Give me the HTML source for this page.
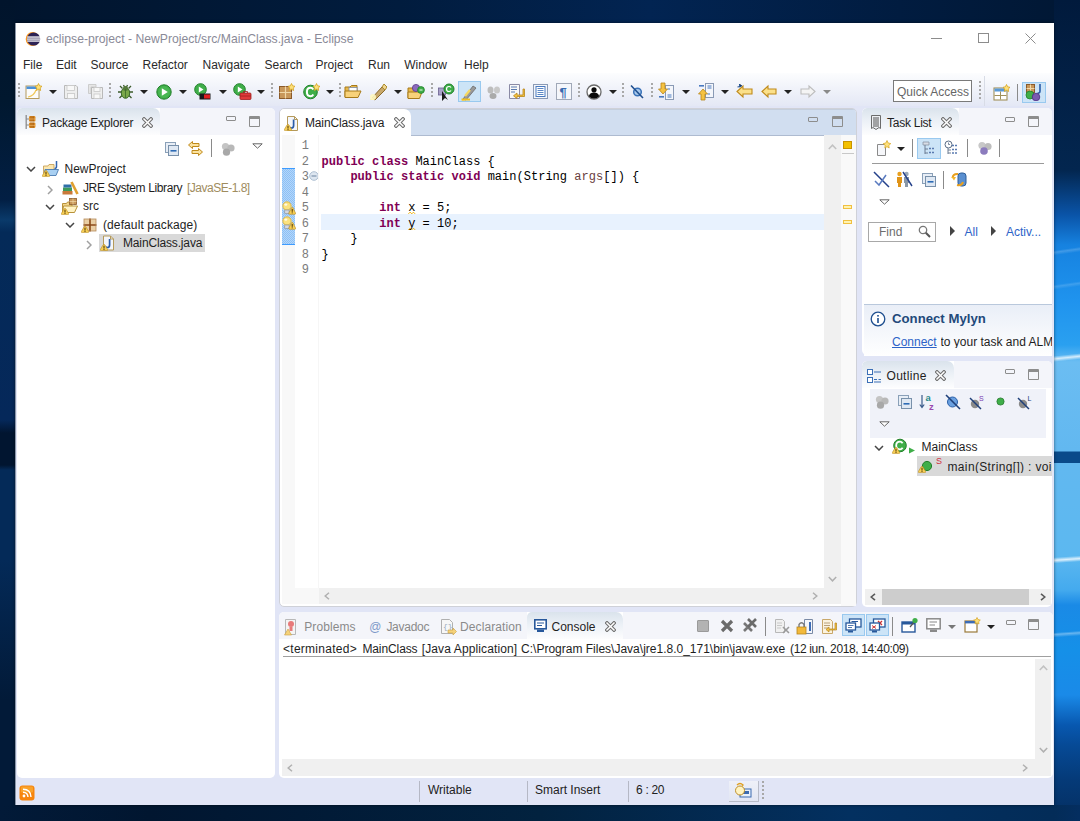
<!DOCTYPE html>
<html><head><meta charset="utf-8">
<style>
*{box-sizing:border-box;margin:0;padding:0}
html,body{width:1080px;height:821px;overflow:hidden}
body{position:relative;font-family:"Liberation Sans",sans-serif;font-size:12px;color:#000;background:#02183a}
.a{position:absolute}
.t{position:absolute;white-space:pre;line-height:12px;font-size:12px}
.m{font-family:"Liberation Mono",monospace}
#bgR{left:1054px;top:0;width:26px;height:821px;
background:
linear-gradient(172deg,transparent 248px,rgba(255,255,255,0.18) 250px,transparent 253px),
linear-gradient(172deg,transparent 282px,rgba(255,255,255,0.15) 284px,transparent 287px),
linear-gradient(174deg,transparent 354px,rgba(255,255,255,0.75) 357px,transparent 360px),
linear-gradient(176deg,transparent 556px,rgba(255,255,255,0.8) 559px,transparent 562px),
linear-gradient(176deg,transparent 631px,rgba(255,255,255,0.35) 633px,transparent 636px),
linear-gradient(180deg,transparent 451px,#0a4a8a 452px,#0a4a8a 463px,transparent 463px),
linear-gradient(180deg,#011a3c 0px,#03264f 170px,#0a54a8 215px,#1682e0 245px,#1f93ee 300px,#2aa0f0 345px,#6bbdf2 362px,#62b8f0 450px,#5cb8f0 555px,#44aaee 590px,#1a8ae6 605px,#1590e8 650px,#1a8ae8 695px,#0858b0 725px,#064a96 745px,#053a78 780px,#042e60 821px)}
#bgB{left:0;top:805px;width:1080px;height:16px;background:linear-gradient(90deg,#021a38 0,#011630 150px,#011a36 300px,#02223f 540px,#033060 850px,#032c58 1054px,#042e60 1080px)}
#bgT{left:0;top:0;width:1080px;height:23px;background:linear-gradient(90deg,#01142c 0,#011c3e 400px,#022452 650px,#011c40 900px,#011733 1080px)}
#bgL{left:0;top:0;width:15px;height:821px;background:linear-gradient(180deg,#01142c 0,#01182f 100px,#021f44 200px,#0a3a6a 220px,#042a58 232px,#05285a 420px,#011530 433px,#011530 465px,#042a58 470px,#042a58 560px,#03234a 620px,#021a38 700px,#021a38 821px)}
#win{left:15px;top:23px;width:1039px;height:782px;background:#fff;border-left:1px solid #8a96a8;box-shadow:0 0 3px rgba(0,0,0,0.5)}
#tool{left:16px;top:73px;width:1038px;height:33px;background:linear-gradient(180deg,#fcfdfe 0,#f1f3fa 45%,#e4e8f5 100%)}
#main{left:16px;top:106px;width:1038px;height:699px;background:#e1e5f6}
.p{position:absolute;background:#fff;border-radius:5px;overflow:hidden}
.tab{position:absolute;top:0;height:27px;border-radius:5px 7px 0 0;background:linear-gradient(180deg,#dae3ec 0,#ebf0f6 45%,#fdfdfe 100%)}
.hrest{position:absolute;top:0;height:27px;background:#f4f5fa}
.mini{position:absolute;width:10px;height:5px;border:1.5px solid #8d8d8d;border-radius:1px}
.maxi{position:absolute;width:11px;height:11px;border:1.3px solid #8d8d8d;border-top-width:3px;border-radius:1px}
.sep{position:absolute;width:1px;background:#9a9a9a}
.dots{position:absolute;width:2px;background:repeating-linear-gradient(180deg,#a8a8a8 0,#a8a8a8 2px,transparent 2px,transparent 4px)}
.dd{position:absolute;width:0;height:0;border-left:4px solid transparent;border-right:4px solid transparent;border-top:4px solid #222}
.ico{position:absolute}
.cl{position:absolute}
.sb{position:absolute;background:#f0f0f0}
.k{color:#7f0055;font-weight:bold}
.v{color:#6a3e3e}
.code{font-size:12px;letter-spacing:0.02px}
</style></head><body>

<svg width="0" height="0" style="position:absolute">
<defs>
 <symbol id="xcl" viewBox="0 0 11 11"><path d="M2 2L9 9M9 2L2 9" stroke="#6e6e6e" stroke-width="3.6" stroke-linecap="square" fill="none"/><path d="M2 2L9 9M9 2L2 9" stroke="#fff" stroke-width="1.5" stroke-linecap="square" fill="none"/></symbol>
 <symbol id="warn" viewBox="0 0 8 7"><path d="M3.1 0.9Q4 -0.2 4.9 0.9L7.6 5.4Q8 6.6 6.8 6.6H1.2Q0 6.6 0.4 5.4Z" fill="#f7cf55" stroke="#b98a1e" stroke-width="0.6"/><rect x="3.5" y="1.8" width="1" height="2.8" fill="#4a3200"/><rect x="3.5" y="5.1" width="1" height="0.9" fill="#4a3200"/></symbol>
 <symbol id="chvd" viewBox="0 0 10 6"><path d="M1 1L5 5L9 1" stroke="#454545" stroke-width="1.5" fill="none"/></symbol>
 <symbol id="chvr" viewBox="0 0 6 10"><path d="M1 1L5 5L1 9" stroke="#a0a0a0" stroke-width="1.5" fill="none"/></symbol>
 <symbol id="jfile" viewBox="0 0 16 16"><path d="M3.5 1.5H10.5L13.5 4.5V15.5H3.5Z" fill="#f4f6fb" stroke="#b59a5a" stroke-width="1"/><path d="M10.5 1.5V4.5H13.5" fill="none" stroke="#b59a5a" stroke-width="1"/><path d="M9.6 4.5V10.5Q9.6 13 7.4 13Q6.2 13 5.6 12.3" fill="none" stroke="#2a5ca8" stroke-width="1.7"/></symbol>
 <symbol id="pkg" viewBox="0 0 16 16"><rect x="2" y="2" width="12" height="12" fill="#e9cfa5"/><path d="M8 1.5V14.5M1.5 8H14.5" stroke="#8a4a1a" stroke-width="1.6"/><rect x="2" y="2" width="12" height="12" fill="none" stroke="#b58a5a" stroke-width="0.8"/></symbol>
 <symbol id="balls" viewBox="0 0 16 16"><circle cx="5.5" cy="5.5" r="3.6" fill="#c4c4c4"/><circle cx="11" cy="7" r="3.6" fill="#b8b8b8"/><circle cx="6.5" cy="11.2" r="3.6" fill="#a8a8a8"/></symbol>
 <symbol id="collapse" viewBox="0 0 16 16"><rect x="1.5" y="1.5" width="10" height="10" fill="#e8eef6" stroke="#8aa0b8"/><rect x="4.5" y="4.5" width="10" height="10" fill="#dfe8f3" stroke="#7890aa"/><rect x="6.5" y="9" width="6" height="1.6" fill="#2d6bb5"/></symbol>
 <symbol id="tri" viewBox="0 0 11 6"><path d="M0.8 0.8H10.2L5.5 5.2Z" fill="#fff" stroke="#666" stroke-width="1"/></symbol>
</defs></svg>
<div class="a" id="bgT"></div><div class="a" id="bgL"></div><div class="a" id="bgR"></div><div class="a" id="bgB"></div>
<div class="a" id="win"></div>

<!-- ===== Title bar ===== -->
<svg class="a" style="left:25px;top:31px" width="16" height="16" viewBox="0 0 16 16">
 <circle cx="7.6" cy="8" r="6.9" fill="#f7941e"/>
 <circle cx="8.6" cy="8" r="6.6" fill="#2c2255"/>
 <rect x="2.2" y="5.4" width="12.8" height="1.3" fill="#fff"/>
 <rect x="2" y="7.4" width="13.2" height="1.3" fill="#fff"/>
 <rect x="2.2" y="9.4" width="12.8" height="1.3" fill="#fff"/>
</svg>
<div class="t" style="left:46px;top:33.4px;font-size:12.2px;color:#8a8a98">eclipse-project - NewProject/src/MainClass.java - Eclipse</div>
<div class="a" style="left:931px;top:38px;width:11px;height:1px;background:#8c8c8c"></div>
<div class="a" style="left:978px;top:33px;width:11px;height:10px;border:1px solid #8c8c8c"></div>
<svg class="a" style="left:1025px;top:33px" width="11" height="11" viewBox="0 0 11 11"><path d="M0.5 0.5L10.5 10.5M10.5 0.5L0.5 10.5" stroke="#8c8c8c" stroke-width="1"/></svg>

<!-- ===== Menu ===== -->
<div class="t" style="left:23px;top:59px;color:#2a2a2a">File</div>
<div class="t" style="left:56px;top:59px;color:#2a2a2a">Edit</div>
<div class="t" style="left:90.5px;top:59px;color:#2a2a2a">Source</div>
<div class="t" style="left:142.5px;top:59px;color:#2a2a2a">Refactor</div>
<div class="t" style="left:202.5px;top:59px;color:#2a2a2a">Navigate</div>
<div class="t" style="left:264.5px;top:59px;color:#2a2a2a">Search</div>
<div class="t" style="left:315.6px;top:59px;color:#2a2a2a">Project</div>
<div class="t" style="left:368px;top:59px;color:#2a2a2a">Run</div>
<div class="t" style="left:404.3px;top:59px;color:#2a2a2a">Window</div>
<div class="t" style="left:464px;top:59px;color:#2a2a2a">Help</div>

<!-- ===== Toolbar ===== -->
<div class="a" id="tool"></div>

<div class="dots" style="left:18px;top:83px;height:16px"></div>
<svg class="a" style="left:25px;top:83px" width="17" height="17" viewBox="0 0 17 17"><rect x="1" y="3" width="13" height="12.5" fill="#fbfbfb" stroke="#b49a5e" stroke-width="1"/><rect x="1.5" y="3.5" width="12" height="2.5" fill="#4a90d9"/><path d="M3 14Q9 13 11 7" stroke="#f0c75a" stroke-width="1.2" fill="none"/><path d="M13.5 0.5L14.6 2.8L17 3.3L15.2 5L15.6 7.5L13.5 6.3L11.4 7.5L11.8 5L10 3.3L12.4 2.8Z" fill="#fde07a" stroke="#d6a21e" stroke-width="0.8"/></svg>
<div class="dd" style="left:48.5px;top:90px"></div>
<svg class="a" style="left:63px;top:84px" width="16" height="16" viewBox="0 0 16 16"><path d="M1.5 1.5H13L14.5 3V14.5H1.5Z" fill="#eeeeee" stroke="#b9b9b9"/><rect x="4" y="1.5" width="7.5" height="5" fill="#f8f8f8" stroke="#c8c8c8" stroke-width="0.8"/><rect x="4.5" y="9.5" width="7" height="5" fill="#f8f8f8" stroke="#c8c8c8" stroke-width="0.8"/></svg>
<svg class="a" style="left:87px;top:83px" width="17" height="17" viewBox="0 0 17 17"><path d="M1.5 1.5H9V4H4V10.5H1.5Z" fill="#e6e6e6" stroke="#c4c4c4" stroke-width="0.8"/><path d="M4.5 4.5H15.5V15.5H4.5Z" fill="#eeeeee" stroke="#b9b9b9"/><rect x="7" y="4.5" width="6" height="4" fill="#f8f8f8" stroke="#c8c8c8" stroke-width="0.8"/><rect x="7" y="11" width="6" height="4.5" fill="#f8f8f8" stroke="#c8c8c8" stroke-width="0.8"/></svg>
<div class="dots" style="left:109px;top:83px;height:16px"></div>
<svg class="a" style="left:117px;top:83px" width="17" height="17" viewBox="0 0 17 17"><path d="M3 3L5.5 5.5M14 3L11.5 5.5M1 9H4.5M16 9H12.5M2.5 15L5 12.5M14.5 15L12 12.5M6.5 2L7.5 4M10.5 2L9.5 4" stroke="#3b5a2a" stroke-width="1.3"/><ellipse cx="8.5" cy="10" rx="4.2" ry="5.3" fill="#7aa84a" stroke="#3b6a2a"/><circle cx="8.5" cy="5.5" r="2.5" fill="#557a3a"/><path d="M8.5 6V15" stroke="#3b6a2a" stroke-width="0.8"/></svg>
<div class="dd" style="left:140px;top:90px"></div>
<svg class="a" style="left:156px;top:84px" width="16" height="16" viewBox="0 0 16 16"><circle cx="8" cy="8" r="7.2" fill="#3fae49" stroke="#21802a"/><circle cx="8" cy="8" r="5.8" fill="#49b752"/><path d="M5.8 4.3L11.8 8L5.8 11.7Z" fill="#fff"/></svg>
<div class="dd" style="left:179px;top:90px"></div>
<svg class="a" style="left:194px;top:83px" width="17" height="17" viewBox="0 0 17 17"><circle cx="6.5" cy="6.5" r="5.8" fill="#3fae49" stroke="#21802a"/><path d="M4.8 3.6L9.5 6.5L4.8 9.4Z" fill="#fff"/><rect x="5.5" y="10.5" width="11" height="6" fill="#1a1a1a"/><rect x="10" y="11.5" width="6" height="4" fill="#e02020"/></svg>
<div class="dd" style="left:218.5px;top:90px"></div>
<svg class="a" style="left:233px;top:83px" width="19" height="17" viewBox="0 0 19 17"><circle cx="6.5" cy="6.5" r="5.8" fill="#3fae49" stroke="#21802a"/><path d="M4.8 3.6L9.5 6.5L4.8 9.4Z" fill="#fff"/><rect x="7" y="10" width="11" height="6.5" rx="1" fill="#e03a3a" stroke="#a02020" stroke-width="0.8"/><path d="M10.5 10V8.5H14.5V10M7 13H18" stroke="#a02020" stroke-width="0.8" fill="none"/></svg>
<div class="dd" style="left:257px;top:90px"></div>
<div class="dots" style="left:271px;top:83px;height:16px"></div>
<svg class="a" style="left:278px;top:83px" width="17" height="17" viewBox="0 0 17 17"><rect x="1.5" y="3.5" width="12" height="12" fill="#c8975a" stroke="#8a5a2a"/><path d="M7.5 3.5V15.5M1.5 9.5H13.5" stroke="#f0d8a8" stroke-width="1.2"/><path d="M13.5 0.5L14.6 2.8L17 3.3L15.2 5L15.6 7.5L13.5 6.3L11.4 7.5L11.8 5L10 3.3L12.4 2.8Z" fill="#fde07a" stroke="#d6a21e" stroke-width="0.8"/></svg>
<svg class="a" style="left:303px;top:83px" width="17" height="17" viewBox="0 0 17 17"><circle cx="7.5" cy="9" r="6.8" fill="#3fae49" stroke="#21802a"/><path d="M10.3 6.6Q9.3 4.8 7.5 4.8Q3.9 4.8 3.9 9Q3.9 13.2 7.5 13.2Q9.3 13.2 10.3 11.4" stroke="#fff" stroke-width="2" fill="none"/><path d="M13.5 0.5L14.6 2.8L17 3.3L15.2 5L15.6 7.5L13.5 6.3L11.4 7.5L11.8 5L10 3.3L12.4 2.8Z" fill="#fde07a" stroke="#d6a21e" stroke-width="0.8"/></svg>
<div class="dd" style="left:326px;top:90px"></div>
<div class="dots" style="left:339px;top:83px;height:16px"></div>
<svg class="a" style="left:344px;top:84px" width="18" height="16" viewBox="0 0 18 16"><path d="M1 3H6L7.5 1.5H13V13H1Z" fill="#e8b84a" stroke="#a77a1a"/><rect x="5" y="3.5" width="8" height="5" fill="#fff" stroke="#7a8aa5" stroke-width="0.8"/><path d="M1 7H17L14 13.5H1Z" fill="#f8d27a" stroke="#a77a1a"/></svg>
<svg class="a" style="left:369px;top:83px" width="18" height="18" viewBox="0 0 18 18"><path d="M3 15L13 4L16 7L6 17Z" fill="#c8a86a" stroke="#8a6a2a"/><path d="M13 4L15 1L18 4L16 7Z" fill="#f0d590" stroke="#a8892a"/><path d="M1 17L3 15L6 17Z" fill="#fff3a0"/><circle cx="4" cy="14" r="3" fill="#fff8c0" opacity="0.9"/></svg>
<div class="dd" style="left:394px;top:90px"></div>
<svg class="a" style="left:407px;top:83px" width="19" height="17" viewBox="0 0 19 17"><path d="M1 5H6L7.5 3.5H12V15H1Z" fill="#e8b84a" stroke="#a77a1a"/><path d="M1 9H15L12.5 15.5H1Z" fill="#f8d27a" stroke="#a77a1a"/><circle cx="9" cy="5" r="3.6" fill="#8a6abd" stroke="#5a3a8a" stroke-width="0.8"/><circle cx="14" cy="7" r="3.4" fill="#3fae49" stroke="#21802a" stroke-width="0.8"/><path d="M12.5 7H15.5" stroke="#fff" stroke-width="0.9"/></svg>
<div class="dots" style="left:431px;top:83px;height:16px"></div>
<svg class="a" style="left:437px;top:83px" width="18" height="18" viewBox="0 0 18 18"><rect x="1.5" y="5" width="7" height="7" fill="#a8a0c8" stroke="#6a6090" stroke-width="0.8"/><circle cx="12" cy="6" r="5" fill="#3fae49" stroke="#21802a"/><path d="M14 4.5Q13.3 3.5 12 3.5Q9.5 3.5 9.5 6Q9.5 8.5 12 8.5Q13.3 8.5 14 7.5" stroke="#fff" stroke-width="1.2" fill="none"/><path d="M5 8L5 18L8 15L11 17Z" fill="#1a1a1a"/></svg>
<div class="a" style="left:458px;top:80.5px;width:23px;height:21.5px;background:#cce4f7;border:1px solid #99c9ef"></div>
<svg class="a" style="left:461px;top:84px" width="17" height="17" viewBox="0 0 17 17"><path d="M2 15L12 2L15 4L5 16Z" fill="#9a9a9a" stroke="#6a6a6a" stroke-width="0.8"/><path d="M2 15L5 16L1 17Z" fill="#ffd84a"/><path d="M0.5 15.5H9" stroke="#f0c020" stroke-width="2"/><path d="M4 12L9 6" stroke="#f6d860" stroke-width="2.2"/></svg>
<svg class="a" style="left:486px;top:85px" width="16" height="15" viewBox="0 0 16 15"><ellipse cx="4.5" cy="5" rx="3" ry="3.5" fill="#bdbdbd"/><ellipse cx="11" cy="5" rx="3" ry="3.5" fill="#c8c8c8"/><ellipse cx="7" cy="11" rx="3.5" ry="3" fill="#aaaaaa"/></svg>
<svg class="a" style="left:508px;top:83px" width="18" height="17" viewBox="0 0 18 17"><path d="M1.5 1.5H11.5V15.5H1.5Z" fill="#f8f8f8" stroke="#8a8aa5"/><path d="M3 4H9M3 6.5H9M3 9H7" stroke="#5a7ab0"/><path d="M15 6V12H9V10L5.5 12.8L9 15.5V13.5H16.5V6Z" fill="#f5c242" stroke="#b8861a" stroke-width="0.8"/></svg>
<svg class="a" style="left:532px;top:83px" width="17" height="17" viewBox="0 0 17 17"><rect x="1.5" y="1.5" width="14" height="14" fill="#f4f6fb" stroke="#8a9ab5"/><rect x="4" y="3.5" width="9" height="10" fill="#fff" stroke="#4a7ac0"/><path d="M5.5 5.5H11.5M5.5 7.5H11.5M5.5 9.5H11.5M5.5 11.5H11.5" stroke="#4a7ac0" stroke-width="0.9"/></svg>
<svg class="a" style="left:556px;top:83px" width="16" height="17" viewBox="0 0 16 17"><rect x="0.5" y="0.5" width="15" height="16" fill="#f4f6fb" stroke="#a0a8b8"/><text x="3.5" y="13.5" font-family="Liberation Sans" font-size="13" font-weight="bold" fill="#3a6ab0">&#182;</text></svg>
<div class="dots" style="left:578px;top:83px;height:16px"></div>
<svg class="a" style="left:585.5px;top:84px" width="16" height="16" viewBox="0 0 16 16"><circle cx="8" cy="8" r="7" fill="#fff" stroke="#6a6a6a" stroke-width="1.3"/><circle cx="8" cy="5.8" r="2.6" fill="#0a0a0a"/><path d="M2.8 12.2Q3.5 8.4 8 8.4Q12.5 8.4 13.2 12.2Q11 14.6 8 14.6Q5 14.6 2.8 12.2Z" fill="#0a0a0a"/></svg>
<div class="dd" style="left:609px;top:90px"></div>
<div class="dots" style="left:622px;top:83px;height:16px"></div>
<svg class="a" style="left:630px;top:84px" width="14" height="15" viewBox="0 0 14 15"><circle cx="7.5" cy="8" r="3.8" fill="#a8c8ec" stroke="#3a72b8" stroke-width="1.5"/><path d="M1 1.5L13 14" stroke="#1f4f8f" stroke-width="1.6"/></svg>
<div class="dots" style="left:651px;top:83px;height:16px"></div>
<svg class="a" style="left:658px;top:82px" width="17" height="19" viewBox="0 0 17 19"><rect x="7.5" y="3.5" width="8" height="14" fill="#f4f6fb" stroke="#8a9ab5"/><path d="M9.5 13H13.5M9.5 15H13.5M9.5 7H12" stroke="#4a7ac0"/><path d="M3 1H7V7H9.5L5 12L0.5 7H3Z" fill="#f5c242" stroke="#b8861a" stroke-width="0.8"/><rect x="1" y="14" width="5" height="1.6" fill="#4a7ac0"/></svg>
<div class="dd" style="left:682px;top:90px"></div>
<svg class="a" style="left:697.5px;top:82px" width="17" height="19" viewBox="0 0 17 19"><rect x="7.5" y="1.5" width="8" height="14" fill="#f4f6fb" stroke="#8a9ab5"/><path d="M9.5 4H13.5M9.5 6H13.5M9.5 12H12" stroke="#4a7ac0"/><path d="M3 18H7V12H9.5L5 7L0.5 12H3Z" fill="#f5c242" stroke="#b8861a" stroke-width="0.8"/><rect x="1" y="3" width="5" height="1.6" fill="#4a7ac0"/></svg>
<div class="dd" style="left:721px;top:90px"></div>
<svg class="a" style="left:736px;top:83px" width="17" height="17" viewBox="0 0 17 17"><path d="M1 8.5L7 3V6H16V11H7V14Z" fill="#fbe08a" stroke="#c08a1a" stroke-width="1.1"/><path d="M3.5 1L4 3.5L6 2.5M4 3.5L1.5 4" stroke="#1f4f8f" stroke-width="1.2"/></svg>
<svg class="a" style="left:761px;top:83px" width="16" height="17" viewBox="0 0 16 17"><path d="M1 8.5L7 3V6H15V11H7V14Z" fill="#fbe08a" stroke="#c08a1a" stroke-width="1.1"/></svg>
<div class="dd" style="left:784px;top:90px"></div>
<svg class="a" style="left:799.5px;top:83px" width="16" height="17" viewBox="0 0 16 17"><path d="M15 8.5L9 3V6H1V11H9V14Z" fill="#f4f4f4" stroke="#bdbdbd" stroke-width="1.1"/></svg>
<div class="dd" style="left:822.5px;top:90px;border-top-color:#8a8a8a"></div>

<div class="dots" style="left:979px;top:81px;height:20px"></div>
<div class="a" style="left:984px;top:76px;width:1px;height:30px;background:#d8dce6"></div>
<svg class="a" style="left:993px;top:84px" width="17" height="17" viewBox="0 0 17 17"><rect x="1" y="4" width="13" height="12" fill="#fff" stroke="#a0905a" stroke-width="1.1"/><rect x="1.5" y="4.5" width="12" height="3" fill="#5a9ad8"/><path d="M7.5 7.5V15.5M1.5 11.5H13.5" stroke="#a0905a"/><path d="M13.5 0.5L14.6 2.8L17 3.3L15.2 5L15.6 7.5L13.5 6.3L11.4 7.5L11.8 5L10 3.3L12.4 2.8Z" fill="#fde07a" stroke="#d6a21e" stroke-width="0.8"/></svg>
<div class="sep" style="left:1016.5px;top:84px;height:17px;background:#8a8a8a"></div>
<div class="a" style="left:1022px;top:81.5px;width:24px;height:21.5px;background:#cce4f7;border:1px solid #99c9ef"></div>
<svg class="a" style="left:1025px;top:83px" width="18" height="18" viewBox="0 0 18 18"><rect x="1.5" y="1.5" width="8" height="8" fill="#c8975a" stroke="#8a5a2a"/><path d="M5.5 1.5V9.5M1.5 5.5H9.5" stroke="#f0d8a8"/><path d="M15 1V8Q15 10.5 12.5 10" stroke="#2a5ca8" stroke-width="1.6" fill="none"/><circle cx="5" cy="12" r="4" fill="#3fae49" stroke="#21802a" stroke-width="0.8"/><circle cx="11" cy="14" r="3.8" fill="#7a5ab0" stroke="#4a2a80" stroke-width="0.8"/></svg>


<!-- Quick access -->
<div class="a" style="left:893px;top:80px;width:79px;height:22px;border:1px solid #7a7a7a;background:#fff"></div>
<div class="t" style="left:897px;top:86px;color:#666">Quick Access</div>

<!-- ===== Main area ===== -->
<div class="a" id="main"></div>

<!-- Package Explorer -->
<div class="p" style="left:17px;top:108px;width:258px;height:670px">
  <div class="tab" style="left:0;width:143px"></div>
  <div class="hrest" style="left:143px;width:115px"></div>
</div>


<!-- PE content -->
<svg class="a" style="left:25px;top:115px" width="11" height="14" viewBox="0 0 11 14"><rect x="0.6" y="0" width="1.1" height="14" fill="#7a7a7a"/><rect x="1" y="3.5" width="3" height="1" fill="#8a8a8a"/><rect x="1" y="9.5" width="3" height="1" fill="#8a8a8a"/><rect x="4" y="1" width="6.4" height="5.6" rx="1.2" fill="#d98a22"/><rect x="4" y="7.4" width="6.4" height="5.6" rx="1.2" fill="#d98a22"/><path d="M5.9 1.3V6.3M7.2 1.3V6.3M8.5 1.3V6.3M5.9 7.7V12.7M7.2 7.7V12.7M8.5 7.7V12.7" stroke="#9a5210" stroke-width="0.6"/><path d="M4 4H10.4M4 10.4H10.4" stroke="#f6c47a" stroke-width="0.6"/></svg>
<div class="t" style="left:42px;top:117px;color:#1e1e1e;letter-spacing:-0.22px">Package Explorer</div>
<svg class="ico" style="left:141.5px;top:117px" width="11" height="11"><use href="#xcl"/></svg>
<div class="mini" style="left:226px;top:116px"></div>
<div class="maxi" style="left:249px;top:116px"></div>
<svg class="ico" style="left:164px;top:141px" width="16" height="16"><use href="#collapse"/></svg>
<svg class="a" style="left:187px;top:140px" width="17" height="17" viewBox="0 0 17 17"><path d="M1.5 5L5.5 1.5V3.5H12V6.5H5.5V8.5Z" fill="#fbe3a0" stroke="#c08a1a" stroke-width="1"/><path d="M15.5 12L11.5 8.5V10.5H5V13.5H11.5V15.5Z" fill="#fbe3a0" stroke="#c08a1a" stroke-width="1"/></svg>
<div class="sep" style="left:210.5px;top:139px;height:18px;background:#8a8a8a"></div>
<svg class="ico" style="left:220px;top:141px" width="16" height="16"><use href="#balls"/></svg>
<svg class="ico" style="left:252px;top:143px" width="11" height="6"><use href="#tri"/></svg>

<svg class="ico" style="left:26px;top:166px" width="10" height="6"><use href="#chvd"/></svg>
<svg class="a" style="left:42px;top:160px" width="18" height="18" viewBox="0 0 18 18"><path d="M1.5 6H6L7 4.5H12V13H1.5Z" fill="#fbe7b0" stroke="#c9a35a" stroke-width="0.9"/><path d="M3 9.5H16.5L14 15.5H2Z" fill="#a9d0f2" stroke="#4a7ab0" stroke-width="0.9"/><path d="M14.5 1V6.5Q14.5 8.5 12.5 8.5" stroke="#3366b0" stroke-width="1.5" fill="none"/></svg>
<svg class="ico" style="left:41.5px;top:169.5px" width="8" height="7"><use href="#warn"/></svg>
<div class="t" style="left:64.5px;top:163.3px;color:#1e1e1e">NewProject</div>

<svg class="ico" style="left:47px;top:184.5px" width="6" height="10"><use href="#chvr"/></svg>
<svg class="a" style="left:62px;top:181px" width="17" height="14" viewBox="0 0 17 14"><rect x="0.5" y="10" width="10" height="3.5" fill="#c8793a"/><rect x="1" y="6.5" width="9" height="3.5" fill="#3d9a5a"/><rect x="1.5" y="3.5" width="8" height="3" fill="#2f6fa8"/><path d="M9.5 1L15.5 13" stroke="#e0a030" stroke-width="2.6"/></svg>
<div class="t" style="left:83px;top:181.5px;color:#1e1e1e;letter-spacing:-0.38px">JRE System Library</div>
<div class="t" style="left:187px;top:181.5px;color:#a08c5e;letter-spacing:-0.5px">[JavaSE-1.8]</div>

<svg class="ico" style="left:45px;top:203.5px" width="10" height="6"><use href="#chvd"/></svg>
<svg class="a" style="left:61px;top:198px" width="18" height="17" viewBox="0 0 18 17"><path d="M1.5 5.5H5.5L6.5 4H11V14.5H1.5Z" fill="#f2d58a" stroke="#b8923a"/><path d="M2.5 8H16.5L13.5 14.5H1.5Z" fill="#fff3c4" stroke="#b8923a"/><rect x="8.5" y="0.5" width="7" height="6" fill="#c8975a" stroke="#8a5a2a" stroke-width="0.8"/><path d="M12 0.5V6.5M8.5 3.5H15.5" stroke="#f0d8a8" stroke-width="0.7"/></svg>
<svg class="ico" style="left:60.5px;top:207.5px" width="8" height="7"><use href="#warn"/></svg>
<div class="t" style="left:83px;top:200.3px;color:#1e1e1e">src</div>

<svg class="ico" style="left:65px;top:222px" width="10" height="6"><use href="#chvd"/></svg>
<svg class="ico" style="left:82px;top:217px" width="16" height="16"><use href="#pkg"/></svg>
<svg class="ico" style="left:80.5px;top:226.0px" width="8" height="7"><use href="#warn"/></svg>
<div class="t" style="left:103px;top:219px;color:#1e1e1e;letter-spacing:0.1px">(default package)</div>

<svg class="ico" style="left:86px;top:239.5px" width="6" height="10"><use href="#chvr"/></svg>
<div class="a" style="left:98.5px;top:233.5px;width:106px;height:18.5px;background:#d9d9d9"></div>
<svg class="ico" style="left:100px;top:234px" width="16" height="17"><use href="#jfile"/></svg>
<svg class="ico" style="left:99.5px;top:243.5px" width="8" height="7"><use href="#warn"/></svg>
<div class="t" style="left:123px;top:237px;color:#1e1e1e;letter-spacing:-0.15px">MainClass.java</div>

<!-- Editor -->
<div class="p" style="left:279px;top:108px;width:578px;height:499px;border:1px solid #cfd1d8">
  <div class="a" style="left:120px;top:0;width:457px;height:27px;background:#d1def0;border-top:1px solid #c5cfdd;border-bottom:1px solid #aebbd0"></div>
  <div class="a" style="left:0;top:0;width:131px;height:27px;background:#fff;border-radius:5px 7px 0 0"></div>
</div>


<!-- Editor content -->
<svg class="ico" style="left:284px;top:115px" width="16" height="16"><use href="#jfile"/></svg>
<svg class="ico" style="left:283.5px;top:123.5px" width="8" height="7"><use href="#warn"/></svg>
<div class="t" style="left:305px;top:117.3px;color:#1e1e1e;letter-spacing:-0.15px">MainClass.java</div>
<svg class="ico" style="left:393.5px;top:117px" width="11" height="11"><use href="#xcl"/></svg>
<div class="mini" style="left:808px;top:116.5px"></div>
<div class="maxi" style="left:831.5px;top:116px"></div>
<div class="a" style="left:282px;top:135px;width:13px;height:469px;background:#f8f8f8"></div>
<div class="a" style="left:295px;top:588px;width:24px;height:16px;background:#f8f8f8"></div>
<div class="a" style="left:282px;top:168px;width:13px;height:77px;background-color:#b4d6fa;background-image:repeating-conic-gradient(#8cc0f5 0 25%,transparent 0 50%);background-size:2px 2px;border-top:1px solid #3d9bff;border-bottom:1px solid #3d9bff"></div>
<div class="a" style="left:321px;top:214px;width:503px;height:15.6px;background:#e8f2fe"></div>
<div class="t m" style="left:292px;width:17px;text-align:right;top:139.3px;line-height:15.5px;height:15.5px;color:#7b7b7b">1</div>
<div class="t m" style="left:292px;width:17px;text-align:right;top:154.8px;line-height:15.5px;height:15.5px;color:#7b7b7b">2</div>
<div class="t m" style="left:292px;width:17px;text-align:right;top:170.3px;line-height:15.5px;height:15.5px;color:#7b7b7b">3</div>
<div class="t m" style="left:292px;width:17px;text-align:right;top:185.8px;line-height:15.5px;height:15.5px;color:#7b7b7b">4</div>
<div class="t m" style="left:292px;width:17px;text-align:right;top:201.3px;line-height:15.5px;height:15.5px;color:#7b7b7b">5</div>
<div class="t m" style="left:292px;width:17px;text-align:right;top:216.8px;line-height:15.5px;height:15.5px;color:#7b7b7b">6</div>
<div class="t m" style="left:292px;width:17px;text-align:right;top:232.3px;line-height:15.5px;height:15.5px;color:#7b7b7b">7</div>
<div class="t m" style="left:292px;width:17px;text-align:right;top:247.8px;line-height:15.5px;height:15.5px;color:#7b7b7b">8</div>
<div class="t m" style="left:292px;width:17px;text-align:right;top:263.3px;line-height:15.5px;height:15.5px;color:#7b7b7b">9</div>
<div class="t m code" style="left:321.5px;top:154.8px;line-height:15.5px;color:#000"><b class="k">public</b> <b class="k">class</b> MainClass {</div>
<div class="t m code" style="left:321.5px;top:170.3px;line-height:15.5px;color:#000">    <b class="k">public</b> <b class="k">static</b> <b class="k">void</b> main(String <span class="v">args</span>[]) {</div>
<div class="t m code" style="left:321.5px;top:201.3px;line-height:15.5px;color:#000">        <b class="k">int</b> x = 5;</div>
<div class="t m code" style="left:321.5px;top:216.8px;line-height:15.5px;color:#000">        <b class="k">int</b> y = 10;</div>
<div class="t m code" style="left:321.5px;top:232.3px;line-height:15.5px;color:#000">    }</div>
<div class="t m code" style="left:321.5px;top:247.8px;line-height:15.5px;color:#000">}</div>

<svg class="a" style="left:309px;top:171px" width="10" height="10" viewBox="0 0 10 10"><circle cx="5" cy="5" r="4.3" fill="#dde6f0" stroke="#aebfd2"/><rect x="2.5" y="4.4" width="5" height="1.2" fill="#7d93ad"/></svg>
<svg class="a" style="left:282px;top:200.5px" width="14" height="14" viewBox="0 0 14 14"><circle cx="5" cy="5.2" r="4.9" fill="#fff" opacity="0.6"/><circle cx="5" cy="5" r="4.2" fill="#fbe27e" stroke="#c9a232" stroke-width="0.8"/><ellipse cx="3.8" cy="3.6" rx="1.5" ry="1.2" fill="#fff" opacity="0.8"/><rect x="2.6" y="9" width="4.6" height="3.6" rx="0.6" fill="#d4d8de" stroke="#8a929c" stroke-width="0.7"/><path d="M9.6 6.6Q10.2 5.8 10.8 6.6L13.6 12.2Q13.8 13.3 12.8 13.3H7.6Q6.6 13.3 6.8 12.2Z" fill="#f7cf55" stroke="#b98a1e" stroke-width="0.6"/><rect x="9.7" y="8" width="1" height="2.8" fill="#4a3200"/><rect x="9.7" y="11.4" width="1" height="0.9" fill="#4a3200"/></svg>
<svg class="a" style="left:282px;top:216px" width="14" height="14" viewBox="0 0 14 14"><circle cx="5" cy="5.2" r="4.9" fill="#fff" opacity="0.6"/><circle cx="5" cy="5" r="4.2" fill="#fbe27e" stroke="#c9a232" stroke-width="0.8"/><ellipse cx="3.8" cy="3.6" rx="1.5" ry="1.2" fill="#fff" opacity="0.8"/><rect x="2.6" y="9" width="4.6" height="3.6" rx="0.6" fill="#d4d8de" stroke="#8a929c" stroke-width="0.7"/><path d="M9.6 6.6Q10.2 5.8 10.8 6.6L13.6 12.2Q13.8 13.3 12.8 13.3H7.6Q6.6 13.3 6.8 12.2Z" fill="#f7cf55" stroke="#b98a1e" stroke-width="0.6"/><rect x="9.7" y="8" width="1" height="2.8" fill="#4a3200"/><rect x="9.7" y="11.4" width="1" height="0.9" fill="#4a3200"/></svg>

<svg class="a" style="left:407.5px;top:210.5px" width="10" height="4" viewBox="0 0 12 4"><path d="M0.5 3L2.5 1L4.5 3L6.5 1L8.5 3" stroke="#f0b000" stroke-width="1.2" fill="none"/></svg>
<svg class="a" style="left:407.5px;top:226.5px" width="10" height="4" viewBox="0 0 12 4"><path d="M0.5 3L2.5 1L4.5 3L6.5 1L8.5 3" stroke="#f0b000" stroke-width="1.2" fill="none"/></svg>
<!-- scrollbars -->
<div class="sb" style="left:824px;top:135px;width:17px;height:469px"></div>
<svg class="a" style="left:828px;top:144px" width="9" height="6" viewBox="0 0 9 6"><path d="M0.8 5L4.5 1.2L8.2 5" stroke="#c2c2c2" stroke-width="1.5" fill="none"/></svg>
<svg class="a" style="left:828px;top:576px" width="9" height="6" viewBox="0 0 9 6"><path d="M0.8 1L4.5 4.8L8.2 1" stroke="#b0b0b0" stroke-width="1.5" fill="none"/></svg>
<div class="sb" style="left:319px;top:588px;width:505px;height:16px"></div>
<svg class="a" style="left:324px;top:592px" width="6" height="8" viewBox="0 0 6 8"><path d="M5 0.8L1.2 4L5 7.2" stroke="#b0b0b0" stroke-width="1.5" fill="none"/></svg>
<svg class="a" style="left:812px;top:592px" width="6" height="8" viewBox="0 0 6 8"><path d="M1 0.8L4.8 4L1 7.2" stroke="#b0b0b0" stroke-width="1.5" fill="none"/></svg>
<div class="a" style="left:841px;top:135px;width:15px;height:471px;background:#f9f9f9"></div>
<div class="a" style="left:843px;top:141px;width:8.5px;height:8px;background:#f3c000;border:1px solid #c89400"></div>
<div class="a" style="left:842px;top:153px;width:12px;height:1px;background:#c8c8c8"></div>
<div class="a" style="left:843px;top:204.5px;width:9px;height:4px;background:#fff3b0;border:1px solid #f0c040"></div>
<div class="a" style="left:843px;top:220px;width:9px;height:4px;background:#fff3b0;border:1px solid #f0c040"></div>

<!-- Task List -->
<div class="p" style="left:862px;top:108px;width:190px;height:247px">
  <div class="tab" style="left:0;width:97px"></div>
  <div class="hrest" style="left:97px;width:93px"></div>
</div>


<!-- Task list content -->
<svg class="a" style="left:869.5px;top:115px" width="12" height="15" viewBox="0 0 12 15"><path d="M1.5 0.5H10.5V13.5L9 12.5L6 14.5L3 12.5L1.5 13.5Z" fill="#eef0f3" stroke="#6b6b6b"/><path d="M3 3H9M3 5H9M3 7H9M3 9H9M3 11H9" stroke="#555" stroke-width="1"/></svg>
<div class="t" style="left:887px;top:117px;color:#1e1e1e;letter-spacing:-0.25px">Task List</div>
<svg class="ico" style="left:940.5px;top:117px" width="11" height="11"><use href="#xcl"/></svg>
<div class="mini" style="left:1005px;top:116.5px"></div>
<div class="maxi" style="left:1028px;top:116px"></div>

<svg class="a" style="left:876px;top:140px" width="16" height="17" viewBox="0 0 16 17"><path d="M1.5 4.5H9.5V15.5H1.5Z" fill="#f6f7fa" stroke="#8a8a8a"/><path d="M11 0.5L12.2 3L14.8 3.6L12.8 5.4L13.2 8L11 6.7L8.8 8L9.2 5.4L7.2 3.6L9.8 3Z" fill="#fde07a" stroke="#d6a21e" stroke-width="0.7"/></svg>
<div class="dd" style="left:897px;top:146.5px"></div>
<div class="sep" style="left:911.5px;top:139px;height:18px;background:#8a8a8a"></div>
<div class="a" style="left:917px;top:137.5px;width:24px;height:21px;background:#cce4f7;border:1px solid #99c9ef"></div>
<svg class="a" style="left:921px;top:140px" width="16" height="16" viewBox="0 0 16 16"><path d="M2 2H8V5H2Z" fill="#d8dde5" stroke="#8a95a5" stroke-width="0.8"/><path d="M4 5V14M4 9H7M4 13H7" stroke="#6d7d92" stroke-width="1"/><path d="M8 8.5H14M8 12.5H14" stroke="#5a7ab0" stroke-width="1.4" stroke-dasharray="2 1"/></svg>
<svg class="a" style="left:944px;top:140px" width="16" height="16" viewBox="0 0 16 16"><circle cx="4.5" cy="4.5" r="3.5" fill="#fff" stroke="#5a6d85" stroke-width="1"/><path d="M4.5 2.5V4.5H6" stroke="#5a6d85" stroke-width="0.8" fill="none"/><path d="M4 8V14M4 10H7M4 13H7" stroke="#6d7d92" stroke-width="1"/><path d="M8 5.5H14M8 9.5H14M8 13H14" stroke="#5a7ab0" stroke-width="1.4" stroke-dasharray="2 1"/></svg>
<div class="sep" style="left:967px;top:139px;height:18px;background:#8a8a8a"></div>
<svg class="a" style="left:977px;top:140px" width="16" height="16" viewBox="0 0 16 16"><circle cx="5" cy="5.5" r="3.6" fill="#c8c8c8"/><circle cx="11" cy="6.5" r="3.6" fill="#bdbdbd"/><circle cx="7" cy="11" r="3.8" fill="#8b7bbd"/></svg>
<div class="sep" style="left:999px;top:139px;height:18px;background:#8a8a8a"></div>
<div class="a" style="left:872px;top:163px;width:172px;height:1px;background:#9a9a9a"></div>

<svg class="a" style="left:873px;top:171px" width="17" height="17" viewBox="0 0 17 17"><path d="M1 1L16 16" stroke="#24408a" stroke-width="1.5"/><path d="M2 10L6 14L13 4" stroke="#5a7bc0" stroke-width="1.5" fill="none"/></svg>
<svg class="a" style="left:895px;top:171px" width="18" height="17" viewBox="0 0 18 17"><circle cx="4.5" cy="3" r="2.2" fill="#e8a020"/><path d="M2 6H7V12H6V16H3V12H2Z" fill="#e09418"/><circle cx="11.5" cy="3" r="2.2" fill="#9aa8b8"/><path d="M9 6H14V12H13V16H10V12H9Z" fill="#8a98a8"/><path d="M8 1L17 15" stroke="#24408a" stroke-width="1.4"/></svg>
<svg class="ico" style="left:921px;top:172px" width="16" height="16"><use href="#collapse"/></svg>
<div class="sep" style="left:943px;top:171px;height:18px;background:#8a8a8a"></div>
<svg class="a" style="left:951px;top:171px" width="17" height="17" viewBox="0 0 17 17"><rect x="7" y="2" width="8" height="13" rx="3" fill="#5a8fd0" stroke="#2f5f9a"/><path d="M1.5 7Q2 2.5 7 3" stroke="#e8a020" stroke-width="2" fill="none"/><path d="M12 11Q11 15 6 14" stroke="#e8a020" stroke-width="2" fill="none"/><path d="M0.5 6L3 9.5L5 6" fill="#f5b830"/></svg>
<svg class="ico" style="left:878.5px;top:199px" width="11" height="6"><use href="#tri"/></svg>

<div class="a" style="left:868px;top:221.5px;width:68px;height:20px;border:1px solid #a8a8a8;background:#fff"></div>
<div class="t" style="left:879px;top:226.3px;color:#6d6d6d">Find</div>
<svg class="a" style="left:918px;top:224.5px" width="13" height="13" viewBox="0 0 13 13"><circle cx="5" cy="5" r="3.7" fill="#fff" stroke="#777" stroke-width="1.3"/><path d="M7.8 7.8L12 12" stroke="#555" stroke-width="2"/></svg>
<svg class="a" style="left:950px;top:226px" width="5" height="10" viewBox="0 0 5 10"><path d="M0 0L5 5L0 10Z" fill="#444"/></svg>
<div class="t" style="left:964.5px;top:226.3px;color:#2d63c8">All</div>
<svg class="a" style="left:991px;top:226px" width="5" height="10" viewBox="0 0 5 10"><path d="M0 0L5 5L0 10Z" fill="#444"/></svg>
<div class="t" style="left:1006px;top:226.3px;color:#2d63c8">Activ...</div>

<div class="a" style="left:864px;top:303.5px;width:188px;height:52px;background:linear-gradient(180deg,#e9eef7,#ffffff)"></div>
<div class="a" style="left:864px;top:303.5px;width:188px;height:1px;background:#b9c8dc"></div>
<svg class="a" style="left:870px;top:310.5px" width="16" height="16" viewBox="0 0 16 16"><circle cx="8" cy="8" r="6.8" fill="#fff" stroke="#1f4f8f" stroke-width="1.3"/><rect x="7.2" y="7" width="1.6" height="5" fill="#1f4f8f"/><rect x="7.2" y="4" width="1.6" height="1.6" fill="#1f4f8f"/></svg>
<div class="t" style="left:892px;top:312.3px;font-size:13.2px;line-height:13px;font-weight:bold;color:#22497a">Connect Mylyn</div>
<div class="t" style="left:892px;top:335.6px;color:#2d63c8;text-decoration:underline">Connect</div>
<div class="t" style="left:940.5px;top:335.6px;color:#1e1e1e;width:111px;overflow:hidden">to your task and ALM</div>

<!-- Outline -->
<div class="p" style="left:862px;top:361px;width:190px;height:246px">
  <div class="tab" style="left:0;width:92px"></div>
  <div class="hrest" style="left:92px;width:98px"></div>
</div>


<!-- Outline content -->
<svg class="a" style="left:867px;top:368.5px" width="15" height="15" viewBox="0 0 15 15"><rect x="0.5" y="0.5" width="5" height="5" fill="#fff" stroke="#3b6fb6"/><rect x="0.5" y="8.5" width="5" height="5" fill="#fff" stroke="#3b6fb6"/><path d="M7 3H14M7 10.5H10M11.5 10.5H14M7 13H14" stroke="#3b6fb6" stroke-width="1.2"/></svg>
<div class="t" style="left:886.5px;top:369.6px;color:#1e1e1e;letter-spacing:0.3px">Outline</div>
<svg class="ico" style="left:935px;top:369.5px" width="11" height="11"><use href="#xcl"/></svg>
<div class="mini" style="left:1005px;top:368.5px"></div>
<div class="maxi" style="left:1028px;top:368.5px"></div>
<div class="a" style="left:869.5px;top:389px;width:176.5px;height:48.5px;background:#f0f2f9"></div>
<svg class="ico" style="left:873.5px;top:393.5px" width="16" height="16"><use href="#balls"/></svg>
<svg class="ico" style="left:897px;top:393.5px" width="16" height="16"><use href="#collapse"/></svg>
<svg class="a" style="left:919px;top:393px" width="19" height="17" viewBox="0 0 19 17"><path d="M3 2V14M0.8 11.5L3 14.5L5.2 11.5" stroke="#3a5a8a" stroke-width="1.2" fill="none"/><text x="6.5" y="8" font-family="Liberation Sans" font-size="9.5" font-weight="bold" fill="#2a8a8a">a</text><text x="10" y="16.5" font-family="Liberation Sans" font-size="9.5" font-weight="bold" fill="#9a4ab0">z</text></svg>
<svg class="a" style="left:944.5px;top:393.5px" width="16" height="16" viewBox="0 0 16 16"><circle cx="7.5" cy="8" r="5" fill="#6aa0e0" stroke="#2a5fa8"/><path d="M1 1L15 15" stroke="#20407a" stroke-width="1.6"/></svg>
<svg class="a" style="left:969px;top:393.5px" width="16" height="16" viewBox="0 0 16 16"><circle cx="6" cy="10" r="4.2" fill="#8a8a8a"/><path d="M1 4L12 15" stroke="#20407a" stroke-width="1.5"/><text x="10" y="7" font-family="Liberation Sans" font-size="7" fill="#7a3ab0">S</text></svg>
<svg class="a" style="left:994.5px;top:396px" width="11" height="11" viewBox="0 0 11 11"><circle cx="5.5" cy="5.5" r="3.6" fill="#3fae49" stroke="#2a7a30" stroke-width="0.8"/></svg>
<svg class="a" style="left:1016.5px;top:393.5px" width="16" height="16" viewBox="0 0 16 16"><circle cx="6" cy="10" r="4.2" fill="#8a8a8a"/><path d="M1 4L12 15" stroke="#20407a" stroke-width="1.5"/><text x="10.5" y="7" font-family="Liberation Sans" font-size="7" fill="#20407a">L</text></svg>
<svg class="ico" style="left:878.5px;top:420.5px" width="11" height="6"><use href="#tri"/></svg>

<svg class="ico" style="left:874px;top:444.5px" width="10" height="6"><use href="#chvd"/></svg>
<svg class="a" style="left:892px;top:438px" width="25" height="17" viewBox="0 0 25 17"><circle cx="8" cy="7.5" r="6.3" fill="#3fae49" stroke="#21802a"/><path d="M10.6 5.2Q9.6 3.6 8 3.6Q4.2 3.6 4.2 7.5Q4.2 11.4 8 11.4Q9.6 11.4 10.6 9.8" stroke="#fff" stroke-width="1.8" fill="none"/><path d="M17 9.5L23 12.5L17 15.5Z" fill="#3fae49"/></svg>
<svg class="ico" style="left:891.5px;top:446.5px" width="8" height="7"><use href="#warn"/></svg>
<div class="t" style="left:921.5px;top:441.2px;color:#1e1e1e">MainClass</div>
<div class="a" style="left:916.5px;top:456px;width:135px;height:20px;background:#d9d9d9"></div>
<svg class="a" style="left:918px;top:458px" width="16" height="16" viewBox="0 0 16 16"><circle cx="9" cy="8" r="4.6" fill="#3fae49" stroke="#21802a"/></svg>
<svg class="ico" style="left:917.5px;top:465.5px" width="8" height="7"><use href="#warn"/></svg>
<div class="t" style="left:936px;top:457px;font-size:9px;line-height:9px;color:#d03040">S</div>
<div class="t" style="left:947.5px;top:460.8px;color:#1e1e1e;width:104px;overflow:hidden;letter-spacing:0.35px">main(String[]) : void</div>

<div class="a" style="left:864.5px;top:589px;width:186.5px;height:16px;background:#f0f0f0"></div>
<div class="a" style="left:882px;top:589px;width:146.5px;height:16px;background:#cdcdcd"></div>
<svg class="a" style="left:869.5px;top:593px" width="6" height="8" viewBox="0 0 6 8"><path d="M5 0.8L1.2 4L5 7.2" stroke="#5a5a5a" stroke-width="1.6" fill="none"/></svg>
<svg class="a" style="left:1039.5px;top:593px" width="6" height="8" viewBox="0 0 6 8"><path d="M1 0.8L4.8 4L1 7.2" stroke="#5a5a5a" stroke-width="1.6" fill="none"/></svg>

<!-- Console -->
<div class="p" style="left:279px;top:612px;width:774px;height:166px">
  <div class="hrest" style="left:0;width:248px"></div>
  <div class="tab" style="left:248px;width:96px"></div>
  <div class="hrest" style="left:344px;width:430px"></div>
</div>


<!-- Console content -->
<svg class="a" style="left:284px;top:618px" width="16" height="18" viewBox="0 0 16 18"><path d="M1.5 1.5H11.5V16.5H1.5Z" fill="#f4f4f4" stroke="#b8b8b8"/><circle cx="7" cy="6" r="3" fill="#e87a7a"/><rect x="5.5" y="9" width="3" height="4" fill="#e87a7a"/><path d="M0.5 17L4 11L7.5 17Z" fill="#f5d27a" stroke="#c9a040" stroke-width="0.6"/></svg>
<div class="t" style="left:304.2px;top:620.5px;color:#8a8a8a;letter-spacing:0.1px">Problems</div>
<div class="t" style="left:369px;top:620.5px;color:#7d98c8;font-style:italic">@</div>
<div class="t" style="left:386.4px;top:620.5px;color:#8a8a8a;letter-spacing:-0.27px">Javadoc</div>
<svg class="a" style="left:440px;top:618px" width="17" height="18" viewBox="0 0 17 18"><path d="M1.5 1.5H9.5L12.5 4.5V15.5H1.5Z" fill="#f7f7f7" stroke="#b0b0b0"/><text x="3" y="11" font-family="Liberation Mono" font-size="8" fill="#9ab">{}</text><path d="M8 12H13V10L16.5 13.5L13 17V15H8Z" fill="#f5d27a" stroke="#c9a040" stroke-width="0.6"/></svg>
<div class="t" style="left:460px;top:620.5px;color:#8a8a8a;letter-spacing:0.1px">Declaration</div>
<svg class="a" style="left:534px;top:618.5px" width="13" height="14" viewBox="0 0 13 14"><rect x="0.8" y="0.8" width="11.4" height="9" fill="#fff" stroke="#27589b" stroke-width="1.6"/><path d="M3 4H10M3 6.5H8" stroke="#27589b" stroke-width="1.2"/><rect x="3" y="10.5" width="7" height="2.5" fill="#27589b"/></svg>
<div class="t" style="left:551.5px;top:620.5px;color:#1e1e1e">Console</div>
<svg class="ico" style="left:604.5px;top:620.5px" width="11" height="11"><use href="#xcl"/></svg>

<div class="a" style="left:696.5px;top:620px;width:12.5px;height:12px;background:#b3b3b3;border:1px solid #9a9a9a;border-radius:1px"></div>
<svg class="a" style="left:719.5px;top:619px" width="14" height="14" viewBox="0 0 14 14"><path d="M2 2L12 12M12 2L2 12" stroke="#6b6b6b" stroke-width="3.2"/></svg>
<svg class="a" style="left:742px;top:618px" width="16" height="16" viewBox="0 0 16 16"><path d="M2 5L10 13M10 5L2 13" stroke="#777" stroke-width="2.6"/><path d="M6 1L14 9M14 1L6 9" stroke="#6b6b6b" stroke-width="2.6"/></svg>
<div class="sep" style="left:764.5px;top:617px;height:19px;background:#8a8a8a"></div>
<svg class="a" style="left:774px;top:618px" width="16" height="16" viewBox="0 0 16 16"><path d="M1.5 1.5H8.5L10.5 3.5V14.5H1.5Z" fill="#f0f0f0" stroke="#b8b8b8"/><path d="M3 5H8M3 7.5H8M3 10H7" stroke="#c8c8c8"/><path d="M9 9L15 15M15 9L9 15" stroke="#9a9a9a" stroke-width="1.6"/></svg>
<svg class="a" style="left:796px;top:617.5px" width="18" height="17" viewBox="0 0 18 17"><path d="M8.5 1.5H16.5V15.5H8.5Z" fill="#f4f6fb" stroke="#7a8aa5"/><rect x="13" y="4" width="2" height="9" fill="#3d6cb5"/><rect x="1" y="9" width="9" height="7" fill="#f2b93b" stroke="#b8861a" stroke-width="0.8"/><path d="M3 9V6.5Q5.5 3 8 6.5V9" stroke="#777" stroke-width="1.3" fill="none"/></svg>
<svg class="a" style="left:821px;top:617.5px" width="17" height="17" viewBox="0 0 17 17"><path d="M1.5 1.5H9.5L11.5 3.5V15.5H1.5Z" fill="#fbf3df" stroke="#c9a86a"/><path d="M3 5H9M3 7.5H9M3 10H7" stroke="#b8a07a"/><path d="M14 5V11H8V9L5 11.5L8 14V12H15.5V5Z" fill="#f5c242" stroke="#b8861a" stroke-width="0.7"/></svg>
<div class="a" style="left:841.5px;top:613.5px;width:23.5px;height:22px;background:#cce4f7;border:1px solid #99c9ef"></div>
<svg class="a" style="left:845px;top:618px" width="17" height="16" viewBox="0 0 17 16"><rect x="4.5" y="1" width="11.5" height="8" fill="#fff" stroke="#27589b" stroke-width="1.3"/><path d="M6.5 3.5H13M6.5 6H11" stroke="#27589b" stroke-width="1"/><rect x="1" y="5" width="9.5" height="7" fill="#fff" stroke="#27589b" stroke-width="1.3"/><path d="M3 7.5H8.5M3 9.5H7" stroke="#27589b" stroke-width="0.8"/><rect x="3" y="12.5" width="5" height="2" fill="#27589b"/></svg>
<div class="a" style="left:865.5px;top:613.5px;width:23px;height:22px;background:#cce4f7;border:1px solid #99c9ef"></div>
<svg class="a" style="left:869px;top:618px" width="17" height="16" viewBox="0 0 17 16"><rect x="4.5" y="1" width="11.5" height="8" fill="#fff" stroke="#27589b" stroke-width="1.3"/><path d="M9 3L13 7M13 3L9 7" stroke="#d03030" stroke-width="1.3"/><rect x="1" y="5" width="9.5" height="7" fill="#fff" stroke="#27589b" stroke-width="1.3"/><path d="M3 7.5L7 10.5M7 7.5L3 10.5" stroke="#d03030" stroke-width="1"/><rect x="3" y="12.5" width="5" height="2" fill="#27589b"/></svg>
<div class="sep" style="left:892px;top:617px;height:19px;background:#8a8a8a"></div>
<svg class="a" style="left:901px;top:617px" width="17" height="17" viewBox="0 0 17 17"><rect x="1" y="5" width="13" height="10" fill="#fff" stroke="#27589b" stroke-width="1.4"/><rect x="1" y="5" width="13" height="2.5" fill="#27589b"/><path d="M9 10L14 4" stroke="#555" stroke-width="1.2"/><circle cx="14" cy="3.5" r="2.6" fill="#3fae49"/></svg>
<svg class="a" style="left:926px;top:618px" width="15" height="15" viewBox="0 0 15 15"><rect x="0.8" y="0.8" width="13.4" height="10" fill="#fff" stroke="#8a8a8a" stroke-width="1.5"/><path d="M3.5 4H11M3.5 7H9" stroke="#8a8a8a" stroke-width="1.2"/><rect x="4" y="11.5" width="7" height="2.5" fill="#8a8a8a"/></svg>
<div class="dd" style="left:947.5px;top:624.5px;border-top-color:#777"></div>
<svg class="a" style="left:964px;top:617px" width="17" height="17" viewBox="0 0 17 17"><rect x="1" y="4" width="12" height="11" fill="#fff" stroke="#9a7a3a" stroke-width="1.2"/><rect x="1" y="4" width="12" height="2.4" fill="#3d6cb5"/><path d="M13 0.5L14 2.6L16.3 3.1L14.6 4.7L15 7L13 5.9L11 7L11.4 4.7L9.7 3.1L12 2.6Z" fill="#fde07a" stroke="#d6a21e" stroke-width="0.7"/></svg>
<div class="dd" style="left:987px;top:624.5px"></div>
<div class="mini" style="left:1005.5px;top:619.5px"></div>
<div class="maxi" style="left:1028px;top:619px"></div>

<div class="t" style="left:283px;top:642.8px;color:#1e1e1e;letter-spacing:0.27px">&lt;terminated&gt;</div>
<div class="t" style="left:362.4px;top:642.8px;color:#1e1e1e;letter-spacing:-0.1px">MainClass</div>
<div class="t" style="left:421.7px;top:642.8px;color:#1e1e1e;letter-spacing:0.12px">[Java Application]</div>
<div class="t" style="left:521.1px;top:642.8px;color:#1e1e1e">C:\Program Files\Java\jre1.8.0_171\bin\javaw.exe</div>
<div class="t" style="left:790.1px;top:642.8px;color:#1e1e1e;letter-spacing:-0.37px">(12 iun. 2018, 14:40:09)</div>
<div class="a" style="left:283px;top:656px;width:768px;height:1px;background:#a0a0a0"></div>
<div class="sb" style="left:1035px;top:658.5px;width:16px;height:100.5px"></div>
<svg class="a" style="left:1039px;top:665px" width="9" height="6" viewBox="0 0 9 6"><path d="M0.8 5L4.5 1.2L8.2 5" stroke="#c2c2c2" stroke-width="1.5" fill="none"/></svg>
<svg class="a" style="left:1039px;top:747px" width="9" height="6" viewBox="0 0 9 6"><path d="M0.8 1L4.5 4.8L8.2 1" stroke="#b0b0b0" stroke-width="1.5" fill="none"/></svg>
<div class="sb" style="left:282px;top:759px;width:769px;height:16.5px"></div>
<svg class="a" style="left:287px;top:763.5px" width="6" height="8" viewBox="0 0 6 8"><path d="M5 0.8L1.2 4L5 7.2" stroke="#b0b0b0" stroke-width="1.5" fill="none"/></svg>
<svg class="a" style="left:1022px;top:763.5px" width="6" height="8" viewBox="0 0 6 8"><path d="M1 0.8L4.8 4L1 7.2" stroke="#b0b0b0" stroke-width="1.5" fill="none"/></svg>

<!-- status bar -->
<div class="sep" style="left:419px;top:781px;height:21px;background:#b5b8c5"></div>
<div class="sep" style="left:527px;top:781px;height:21px;background:#b5b8c5"></div>
<div class="sep" style="left:628px;top:781px;height:21px;background:#b5b8c5"></div>
<div class="t" style="left:428px;top:784px;color:#222">Writable</div>
<div class="t" style="left:535px;top:784px;color:#222">Smart Insert</div>
<div class="t" style="left:636px;top:784px;color:#222;letter-spacing:-0.3px">6 : 20</div>


<div class="a" style="left:728.5px;top:780.5px;width:30px;height:21px;background:linear-gradient(180deg,#eef0f8,#e2e6f3);border-right:1px solid #b8bcc8;border-bottom:1px solid #b8bcc8"></div>
<svg class="a" style="left:734px;top:782px" width="18" height="17" viewBox="0 0 18 17"><rect x="6" y="7" width="11" height="8" fill="#e8f0fa" stroke="#3a6ab0"/><rect x="8" y="9" width="7" height="3" fill="#3a6ab0"/><circle cx="6" cy="8.5" r="4.5" fill="#fff3c0" stroke="#b8861a" stroke-width="0.9"/><path d="M3 3Q6 0 9 3L8 4" stroke="#e0a020" stroke-width="1.4" fill="none"/></svg>
<div class="dots" style="left:762px;top:781px;height:20px;width:1.5px"></div>

<svg class="a" style="left:18.5px;top:784.5px" width="16" height="16" viewBox="0 0 16 16"><rect x="0.5" y="0.5" width="15" height="15" rx="3" fill="#f7850d"/><rect x="2" y="1.5" width="12" height="6" rx="1" fill="#f9a22a"/><circle cx="5" cy="11" r="1.4" fill="#fff"/><path d="M4 7.2Q8.8 7.4 9 12M4 4.2Q11.8 4.4 12 12" stroke="#fff" stroke-width="1.4" fill="none"/></svg>
<div class="a" style="left:318px;top:135px;width:1px;height:453px;background:#f6f6f6"></div>
</body></html>
